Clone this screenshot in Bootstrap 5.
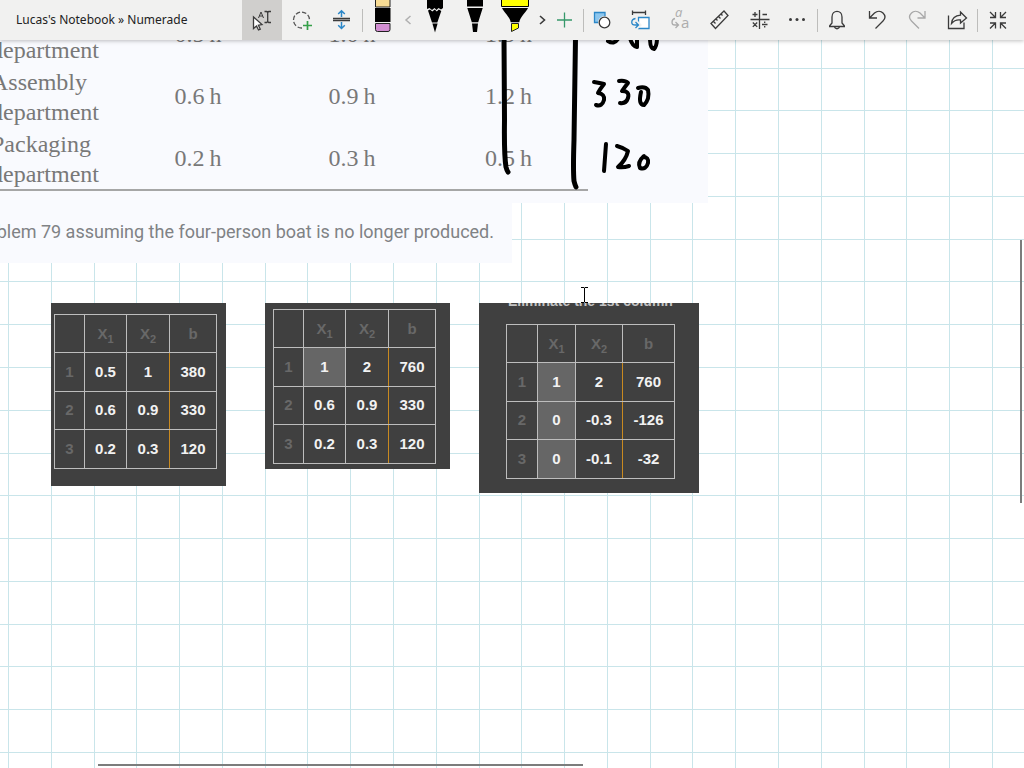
<!DOCTYPE html>
<html lang="en">
<head>
<meta charset="utf-8">
<meta name="viewport" content="width=device-width, initial-scale=1">
<title>Lucas's Notebook » Numerade</title>
<link href="https://cdn.jsdelivr.net/npm/bootstrap@5.3.0/dist/css/bootstrap.min.css" rel="stylesheet">
<style>
  body { font-family: "Noto Sans", "Open Sans", sans-serif; background: #fff; }
  .toolbar { height: 40px; background: #f1f1f0; padding-right: 7px; box-shadow: 0 1px 4px rgba(0,0,0,.25); z-index: 2; }
  .toolbar h1 { font-size: 12px; line-height: 20px; color: #222; padding-left: 16px; }
  .tool { width: 40px; height: 40px; border: 0; padding: 0; background: transparent; flex: none; }
  .tool svg, .step svg { display: block; width: 100%; height: 40px; fill: none; stroke: #3b3b3b; stroke-width: 1.3; }
  .tool.chosen { background: #d0cfcd; }
  .tool.slim { width: 39px; }
  .step { width: 13px; height: 40px; border: 0; padding: 0; background: transparent; flex: none; }
  .step.next { width: 15px; }
  .tool.add { width: 33px; }
  .rule { width: 1px; height: 23px; margin-right: -1px; background: #bdbdbb; flex: none; }
  .page-area { min-height: 0; }
  .grid-paper { inset: 0; width: 100%; height: 100%; }
  .clip { background: #f9fafe; color: #808285; }
  .clip-problem { left: -9px; top: -37px; width: 717px; height: 200px; }
  .clip-question { left: 0; top: 163px; width: 512px; height: 60px; padding: 13px 18px 0 0; font: 18px/32px Roboto, sans-serif; white-space: nowrap; }
  .hours { width: 597px; font: 24px/31px "Liberation Serif", serif; color: #787878; border-bottom: 2px solid #a6a6a6; table-layout: fixed; }
  .hours th { font-weight: 400; padding: 2px 0 0; line-height: 30px; }
  .hours td { padding: 0; text-align: center; }
  .hours .dept { width: 130px; }
  .hours .boat { width: 154px; }
  .ink { left: 490px; top: 0; fill: none; stroke: #000; stroke-linecap: round; stroke-linejoin: round; }
  .shot { background: #404040; top: 263px; }
  .shot-a { left: 51px; width: 175px; height: 183px; padding: 11px 0 0 3px; }
  .shot-b { left: 265px; width: 185px; height: 166px; padding: 6px 0 0 8px; }
  .shot-c { left: 479px; width: 220px; height: 190px; padding: 0 0 0 27px; }
  .caption { font: bold 14px/16px "Liberation Sans", sans-serif; color: #c4c4c4; margin: -10px 0 15px 2px; white-space: nowrap; }
  .matrix { table-layout: fixed; height: 155px; border-collapse: collapse; font: bold 15px/20px "Liberation Sans", sans-serif; color: #f2f2f2; text-align: center; }
  .matrix tr { height: 38px; }
  .matrix th, .matrix td { border: 1px solid #bdbdbd; padding: 0; vertical-align: middle; text-align: center; }
  .matrix th { color: #686868; }
  .matrix sub { font-size: 11px; bottom: -4px; }
  .matrix td:nth-child(3) { border-right-color: #c98a20; }
  .matrix td:last-child { border-left-color: #c98a20; }
  .matrix .pivot { background: #666; }
  .w30 { width: 30px; } .w42 { width: 42px; } .w43 { width: 43px; } .w47 { width: 47px; }
  .w31 { width: 31px; } .w38 { width: 38px; } .w52 { width: 52px; }
  .hbar { left: 98px; bottom: 2px; width: 485px; height: 2px; background: #7c7c7c; }
  .vbar { right: 2px; top: 200px; width: 2px; height: 263px; background: #7c7c7c; }
  .caret { left: 579px; top: 247px; }
</style>
</head>
<body class="vh-100 d-flex flex-column overflow-hidden">
<header class="toolbar d-flex align-items-center position-relative flex-shrink-0">
  <h1 class="m-0 fw-normal flex-grow-1 text-truncate">Lucas's Notebook » Numerade</h1>
  <button class="tool chosen" aria-label="Select or type"><svg viewBox="0 0 40 40"><path d="M11.500 17v11.500l3-2.500 2 4 1.800-.9-1.900-3.900 3.600-.6z" fill="#fff"/><path d="M16.500 18l2.500-6 2.500 6M17.400 16h3.200" stroke-width="1"/><path d="M22.500 11.500h2.200l1 1 1-1H29M22.500 22.500h2.200l1-1 1 1H29M25.700 12.500v9"/></svg></button>
  <button class="tool" aria-label="Lasso select"><svg viewBox="0 0 40 40"><path d="M20 28a8 8 0 1 1 7.500-8" stroke-dasharray="4.500 2" stroke="#555"/><path d="M25.500 21v9M21 25.500h9" stroke="#35a048" stroke-width="1.700"/></svg></button>
  <button class="tool" aria-label="Insert space"><svg viewBox="0 0 40 40"><path d="M11 18.500h17M11 20.500h17"/><path d="M19.500 17v-6M16.200 14l3.300-3.300 3.300 3.300M19.500 22v6M16.200 25.200l3.300 3.300 3.300-3.300" stroke="#2b87c8" stroke-width="1.500"/></svg></button>
  <span class="rule"></span>
  <button class="tool" aria-label="Eraser"><svg viewBox="0 0 40 40"><path d="M13.500 -1H28v8H13.500z" fill="#f8dc94" stroke="#222" stroke-width="1"/><path d="M13 8h15.500v14H13z" fill="#000" stroke="none"/><path d="M13.500 23.500H28v6q0 2-2 2H15.500q-2 0-2-2z" fill="#d28ed2" stroke="#222" stroke-width="1"/></svg></button>
  <button class="step" aria-label="Previous pens"><svg viewBox="0 0 13 40"><path d="M8.500 16l-4.500 4 4.500 4" stroke="#b0b0b0" stroke-width="1.500"/></svg></button>
  <button class="tool" aria-label="Pencil"><svg viewBox="0 0 40 40"><g fill="#000" stroke="none"><path d="M12 0h16v8l-2 1.500-2.500-1.500-2 2-2-2-2.500 2-2.500-2-2.500 1z"/><path d="M13 10.500l2-1 2.300 2 2.500-2 2 2 2-2 2.500 1.500-4 11.500h-5.300z"/><path d="M17.400 23.500h5.200L20 32.500z"/></g></svg></button>
  <button class="tool" aria-label="Pen"><svg viewBox="0 0 40 40"><g fill="#000" stroke="none"><path d="M12 0h16v6.500H12zM12.300 8h15.400l-4.500 14.200h-6.400zM17 23.500h6l-1 8.500h-4z"/></g></svg></button>
  <button class="tool" aria-label="Highlighter"><svg viewBox="0 0 40 40"><path d="M6.500 -1h27v7.500h-27z" fill="#ff0" stroke="#000" stroke-width="1"/><path d="M7 8h26c-1 3-8 9-8.700 14.200h-8.600C15 17 8 11 7 8z" fill="#000" stroke="none"/><path d="M16.500 23.500h7V28l-7 3.500z" fill="#ff0" stroke="#222" stroke-width="1"/></svg></button>
  <button class="step next" aria-label="More pens"><svg viewBox="0 0 15 40"><path d="M5 16l4.500 4-4.500 4" stroke-width="1.600"/></svg></button>
  <button class="tool add" aria-label="Add pen"><svg viewBox="0 0 33 40"><path d="M14.500 12.500v15M7 20h15" stroke="#36986a"/></svg></button>
  <span class="rule"></span>
  <button class="tool slim" aria-label="Shapes"><svg viewBox="0 0 39 40"><path d="M11.500 12.500h10.500v10h-10.500z" fill="#8cc6ee" stroke="#2b87c8"/><circle cx="21.500" cy="22.500" r="6.500" fill="#f1f1f0" stroke="none"/><circle cx="21.500" cy="22.500" r="5.300" fill="#fff"/></svg></button>
  <button class="tool slim" aria-label="Ink to shape"><svg viewBox="0 0 39 40"><path d="M10 12.500h14M10.500 10.500v4.500M23.500 10.500v4.500"/><path d="M16.500 17.500h10.500v11H16.500z" fill="#fff" stroke="#2b87c8"/><path d="M14 18.500c-5 1-5 6.500 0 6.500h2.500M13.500 21l4 4-4 4" stroke="#f1f1f0" stroke-width="3.500"/><path d="M13.500 18.500c-5 1-5 6.500 0 6.500h3M13.500 22l3 3-3 3" stroke="#2b87c8"/></svg></button>
  <button class="tool slim" aria-label="Ink to text"><svg viewBox="0 0 39 40"><g fill="#adadad" stroke="none" font-family="Open Sans, sans-serif"><text x="14" y="17" font-size="13" font-style="italic">a</text><text x="20" y="28" font-size="15">a</text></g><path d="M14 18.500c-4 1-4 6.500 0 6.500h3.500M14.500 22l3 3-3 3" stroke="#adadad"/></svg></button>
  <button class="tool slim" aria-label="Ruler"><svg viewBox="0 0 39 40"><path d="M11 23.500l13-12.500 4 4.500-12.500 13zM13.500 21.500l2 2M16 19l1.500 1.500M18.500 16.500l2 2M21 14l1.500 1.500"/></svg></button>
  <button class="tool slim" aria-label="Math"><svg viewBox="0 0 39 40"><path d="M11.500 19.500h19M20.500 10v19M13.500 14.500h5M16 12v5M23.500 14.500h4.500M13.800 22.500l4.400 4.400M18.200 22.500l-4.400 4.400M23 24.500h5.500M25.700 21.500v1.500M25.700 26v1.500"/></svg></button>
  <button class="tool slim" aria-label="More options"><svg viewBox="0 0 39 40"><g fill="#3b3b3b" stroke="none"><circle cx="12.500" cy="19.500" r="1.500"/><circle cx="19" cy="19.500" r="1.500"/><circle cx="25.500" cy="19.500" r="1.500"/></g></svg></button>
  <span class="rule"></span>
  <button class="tool" aria-label="Notifications"><svg viewBox="0 0 40 40"><path d="M12 26.500h16M12.500 26l2.500-3v-6c0-7.500 10-7.500 10 0v6l2.500 3M17.500 26.500c.5 3 4.500 3 5 0"/></svg></button>
  <button class="tool" aria-label="Undo"><svg viewBox="0 0 40 40"><path d="M12.500 11v7h7.500M12.500 18l5-5c3-2.500 6.500-2 8.500 0 2.500 2.500 2.500 5.500 0 8l-7.500 7.500"/></svg></button>
  <button class="tool" aria-label="Redo" disabled><svg viewBox="0 0 40 40"><path d="M28 11v7h-7.500M28 18l-5-5c-3-2.500-6.500-2-8.500 0-2.500 2.500-2.500 5.500 0 8l7.500 7.500" stroke="#a8a8a8"/></svg></button>
  <button class="tool" aria-label="Share"><svg viewBox="0 0 40 40"><path d="M11.500 15.500v13h15.500v-6"/><path d="M23.500 12l6 6-6 5v-3c-4-.5-6.500.5-9 3.500.5-5 3.500-8 9-8.300z"/></svg></button>
  <span class="rule"></span>
  <button class="tool" aria-label="Exit full screen"><svg viewBox="0 0 40 40"><path d="M13 12l5.500 5.500M13 17.500h5.500V12M29 12l-5.500 5.500M29 17.500h-5.500V12M13 28.500l5.500-5.500M13 23h5.500v5.500M29 28.500l-5.500-5.500M29 23h-5.500v5.500"/></svg></button>
</header>
<main class="page-area position-relative flex-grow-1 overflow-hidden">
  <svg class="grid-paper position-absolute" aria-hidden="true">
    <defs>
      <pattern id="v-lines" x="8" width="385" height="40" patternUnits="userSpaceOnUse"><path fill="#c9e5ea" d="M0 0h1v40H0zM43 0h1v40h-1zM86 0h1v40h-1zM128 0h1v40h-1zM171 0h1v40h-1zM214 0h1v40h-1zM257 0h1v40h-1zM299 0h1v40h-1zM342 0h1v40h-1z"/></pattern>
      <pattern id="h-lines" y="28" width="40" height="385" patternUnits="userSpaceOnUse"><path fill="#c9e5ea" d="M0 0v1h40V0zM0 42v1h40v-1zM0 85v1h40v-1zM0 128v1h40v-1zM0 171v1h40v-1zM0 213v1h40v-1zM0 256v1h40v-1zM0 299v1h40v-1zM0 342v1h40v-1z"/></pattern>
    </defs>
    <rect width="100%" height="100%" fill="url(#v-lines)"/>
    <rect width="100%" height="100%" fill="url(#h-lines)"/>
  </svg>

  <section class="clip clip-problem position-absolute">
    <table class="hours">
      <colgroup><col class="dept"><col class="boat"><col class="boat"><col></colgroup>
      <tbody>
        <tr><th scope="row">Cutting department</th><td>0.5&#8201;h</td><td>1.0&#8201;h</td><td>1.5&#8201;h</td></tr>
        <tr><th scope="row">Assembly department</th><td>0.6&#8201;h</td><td>0.9&#8201;h</td><td>1.2&#8201;h</td></tr>
        <tr><th scope="row">Packaging department</th><td>0.2&#8201;h</td><td>0.3&#8201;h</td><td>0.5&#8201;h</td></tr>
      </tbody>
    </table>
  </section>
  <div class="clip clip-question position-absolute d-flex justify-content-end">Solve Problem 79 assuming the four-person boat is no longer produced.</div>

  <svg class="ink position-absolute" width="180" height="160" viewBox="490 40 180 160" aria-label="Handwritten notes">
    <path stroke-width="5" d="M504 38L504.500 120Q504 155 506 167Q507 171 508 172M575.500 38L574 140Q573 170 574 181Q575 185 576 187"/>
    <path stroke-width="4" d="M608 41q6 4 10-2M630 38q2 8 7 9V38M650 38q0 11 4 11 3-3 3-11"/>
    <path stroke-width="4" d="M594 82Q600 83 604 84Q600 89 598 93Q605 94 604 100Q602 107 596 105M619 81Q625 80 628 83Q624 88 622 91Q630 91 628 98Q626 104 620 103M638 88Q645 86 648 90Q650 99 644 105Q638 105 641 92"/>
    <path stroke-width="4" d="M606 144Q605 157 604 171M617 146Q624 148 628 151Q626 160 618 167Q623 168 629 166M644 156Q637 162 640 168Q646 170 648 163Q649 157 643 157"/>
  </svg>

  <figure class="shot shot-a position-absolute m-0 overflow-hidden">
    <table class="matrix">
      <colgroup><col class="w30"><col class="w42"><col class="w43"><col class="w47"></colgroup>
      <thead><tr><th></th><th>X<sub>1</sub></th><th>X<sub>2</sub></th><th>b</th></tr></thead>
      <tbody>
        <tr><th>1</th><td>0.5</td><td>1</td><td>380</td></tr>
        <tr><th>2</th><td>0.6</td><td>0.9</td><td>330</td></tr>
        <tr><th>3</th><td>0.2</td><td>0.3</td><td>120</td></tr>
      </tbody>
    </table>
  </figure>
  <figure class="shot shot-b position-absolute m-0 overflow-hidden">
    <table class="matrix">
      <colgroup><col class="w30"><col class="w42"><col class="w43"><col class="w47"></colgroup>
      <thead><tr><th></th><th>X<sub>1</sub></th><th>X<sub>2</sub></th><th>b</th></tr></thead>
      <tbody>
        <tr><th>1</th><td class="pivot">1</td><td>2</td><td>760</td></tr>
        <tr><th>2</th><td>0.6</td><td>0.9</td><td>330</td></tr>
        <tr><th>3</th><td>0.2</td><td>0.3</td><td>120</td></tr>
      </tbody>
    </table>
  </figure>
  <figure class="shot shot-c position-absolute m-0 overflow-hidden">
    <figcaption class="caption">Eliminate the 1st column</figcaption>
    <table class="matrix">
      <colgroup><col class="w31"><col class="w38"><col class="w47"><col class="w52"></colgroup>
      <thead><tr><th></th><th>X<sub>1</sub></th><th>X<sub>2</sub></th><th>b</th></tr></thead>
      <tbody>
        <tr><th>1</th><td class="pivot">1</td><td>2</td><td>760</td></tr>
        <tr><th>2</th><td class="pivot">0</td><td>-0.3</td><td>-126</td></tr>
        <tr><th>3</th><td class="pivot">0</td><td>-0.1</td><td>-32</td></tr>
      </tbody>
    </table>
  </figure>

  <svg class="caret position-absolute" width="12" height="16" viewBox="0 0 12 16" fill="none" stroke="#000" aria-hidden="true"><path d="M2 .500h3l.5 1 .5-1h3M2 15.500h3l.5-1 .5 1h3M5.500 1v14"/></svg>
  <div class="hbar position-absolute"></div>
  <div class="vbar position-absolute"></div>
</main>
<script src="https://cdn.jsdelivr.net/npm/bootstrap@5.3.0/dist/js/bootstrap.bundle.min.js"></script>
</body>
</html>
